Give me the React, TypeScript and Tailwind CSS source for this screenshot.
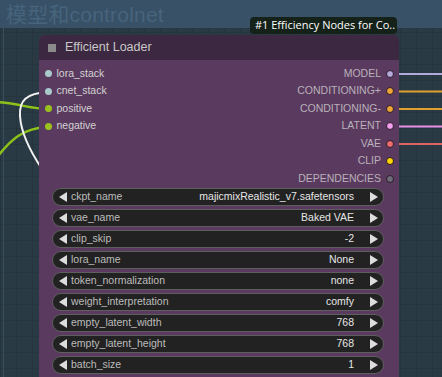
import React from "react";

const inputs = [
  { name: "lora_stack", color: "#a9c9cb" },
  { name: "cnet_stack", color: "#a9c9cb" },
  { name: "positive", color: "#9ac21f" },
  { name: "negative", color: "#9ac21f" },
];

const outputs = [
  { name: "MODEL", color: "#b7a9dc" },
  { name: "CONDITIONING+", color: "#f0a637" },
  { name: "CONDITIONING-", color: "#f0a637" },
  { name: "LATENT", color: "#f59ef2" },
  { name: "VAE", color: "#ee6e6e" },
  { name: "CLIP", color: "#ffd500" },
  { name: "DEPENDENCIES", color: "#6f6b7a" },
];

const widgets = [
  { name: "ckpt_name", value: "majicmixRealistic_v7.safetensors" },
  { name: "vae_name", value: "Baked VAE" },
  { name: "clip_skip", value: "-2" },
  { name: "lora_name", value: "None" },
  { name: "token_normalization", value: "none" },
  { name: "weight_interpretation", value: "comfy" },
  { name: "empty_latent_width", value: "768" },
  { name: "empty_latent_height", value: "768" },
  { name: "batch_size", value: "1" },
];

const font = { fontFamily: '"Liberation Sans", Arial, sans-serif' };

function LeftArrow() {
  return (
    <svg width="8" height="10" viewBox="0 0 8 10" className="shrink-0">
      <polygon points="8,0 8,10 0,5" fill="#dddddd" />
    </svg>
  );
}
function RightArrow() {
  return (
    <svg width="8" height="10" viewBox="0 0 8 10" className="shrink-0">
      <polygon points="0,0 0,10 8,5" fill="#dddddd" />
    </svg>
  );
}

export default function App() {
  return (
    <div
      className="relative w-[442px] h-[377px] overflow-hidden bg-[#2a3a44] bg-[linear-gradient(to_right,#26343d_1px,transparent_1px),linear-gradient(to_bottom,#26343d_1px,transparent_1px)] bg-[size:16px_16px]"
      style={font}
    >
      {/* group */}
      <div className="absolute left-0 top-0 w-[442px] h-[28px] bg-[#385167] flex items-center pl-[6px]">
        <span
          className="text-[21px] leading-none text-[#56779380] text-[#567793] tracking-[0.2px]"
          style={{ fontFamily: '"Liberation Sans", "Noto Sans CJK SC", Arial, sans-serif' }}
        >
          模型和controlnet
        </span>
      </div>
      <div className="absolute left-[3px] top-[28px] w-[1px] h-[349px] bg-[#3a4f5d]" />

      {/* links */}
      <svg className="absolute left-0 top-0" width="442" height="377">
        <path d="M -5 102 C 18 103, 30 109, 48 109" stroke="#8cc21a" strokeWidth="2.5" fill="none" />
        <path d="M -2 156 C 10 141, 22 128, 48 127" stroke="#8cc21a" strokeWidth="2.5" fill="none" />
        <path d="M 48 92 C 26 93, 19 101, 20 116 C 21 133, 30 151, 42 169" stroke="#f2f2f2" strokeWidth="2" fill="none" />
        <line x1="394" y1="74" x2="442" y2="74" stroke="#b3aadc" strokeWidth="2.2" />
        <line x1="394" y1="91.5" x2="442" y2="91.5" stroke="#e0a030" strokeWidth="2.2" />
        <line x1="394" y1="109" x2="442" y2="109" stroke="#e0a030" strokeWidth="2.2" />
        <line x1="394" y1="126.5" x2="442" y2="126.5" stroke="#e690e6" strokeWidth="2.2" />
        <line x1="394" y1="144" x2="442" y2="144" stroke="#dd6464" strokeWidth="2.2" />
      </svg>

      {/* badge */}
      <div
        className="absolute left-[250px] top-[17px] w-[147px] h-[17px] rounded-[4px] bg-[#15221a] flex items-center pl-[5px] text-[11px] text-white whitespace-nowrap z-20"
        style={{ fontFamily: '"Open Sans", "Noto Sans", sans-serif' }}
      >
        #1 Efficiency Nodes for Co..
      </div>

      {/* node */}
      <div className="absolute left-[39px] top-[35px] w-[360px] h-[360px] rounded-t-[6px] overflow-hidden bg-[#5a3a5e] z-10 flex flex-col">
        <div className="h-[25px] bg-[#3c2840] flex items-center pl-[9px] shrink-0">
          <div className="w-[8px] h-[8px] bg-[#8a8a8a]" />
          <span className="ml-[9px] text-[12.5px] text-[#c8c8c8]">Efficient Loader</span>
        </div>
        <div className="flex pt-[5px]">
          <div className="flex flex-col flex-1">
            {inputs.map((i) => (
              <div key={i.name} className="h-[17.5px] flex items-center">
                <div className="ml-[5.5px] w-[7px] h-[7px] rounded-full" style={{ background: i.color }} />
                <span className="ml-[5px] text-[10.5px] text-[#d2d2d2]">{i.name}</span>
              </div>
            ))}
          </div>
          <div className="flex flex-col items-end">
            {outputs.map((o) => (
              <div key={o.name} className="h-[17.5px] flex items-center">
                <span className="text-[10.5px] text-[#b9b1bb]">{o.name}</span>
                <div
                  className="ml-[5px] mr-[5px] w-[8px] h-[8px] rounded-full border border-[#2a1a2a]"
                  style={{ background: o.color }}
                />
              </div>
            ))}
          </div>
        </div>
        <div className="flex flex-col gap-[3px] mt-[0.5px] ml-[13px] mr-[15px]">
          {widgets.map((w) => (
            <div
              key={w.name}
              className="h-[18px] rounded-full bg-[#222222] border border-[#5e5e5e] flex items-center pl-[6px] pr-[5px] text-[10.5px]"
            >
              <LeftArrow />
              <span className="ml-[4px] text-[#bcbcbc]">{w.name}</span>
              <span className="ml-auto text-[#e6e6e6]">{w.value}</span>
              <span className="ml-[16px]"><RightArrow /></span>
            </div>
          ))}
        </div>
      </div>
    </div>
  );
}
